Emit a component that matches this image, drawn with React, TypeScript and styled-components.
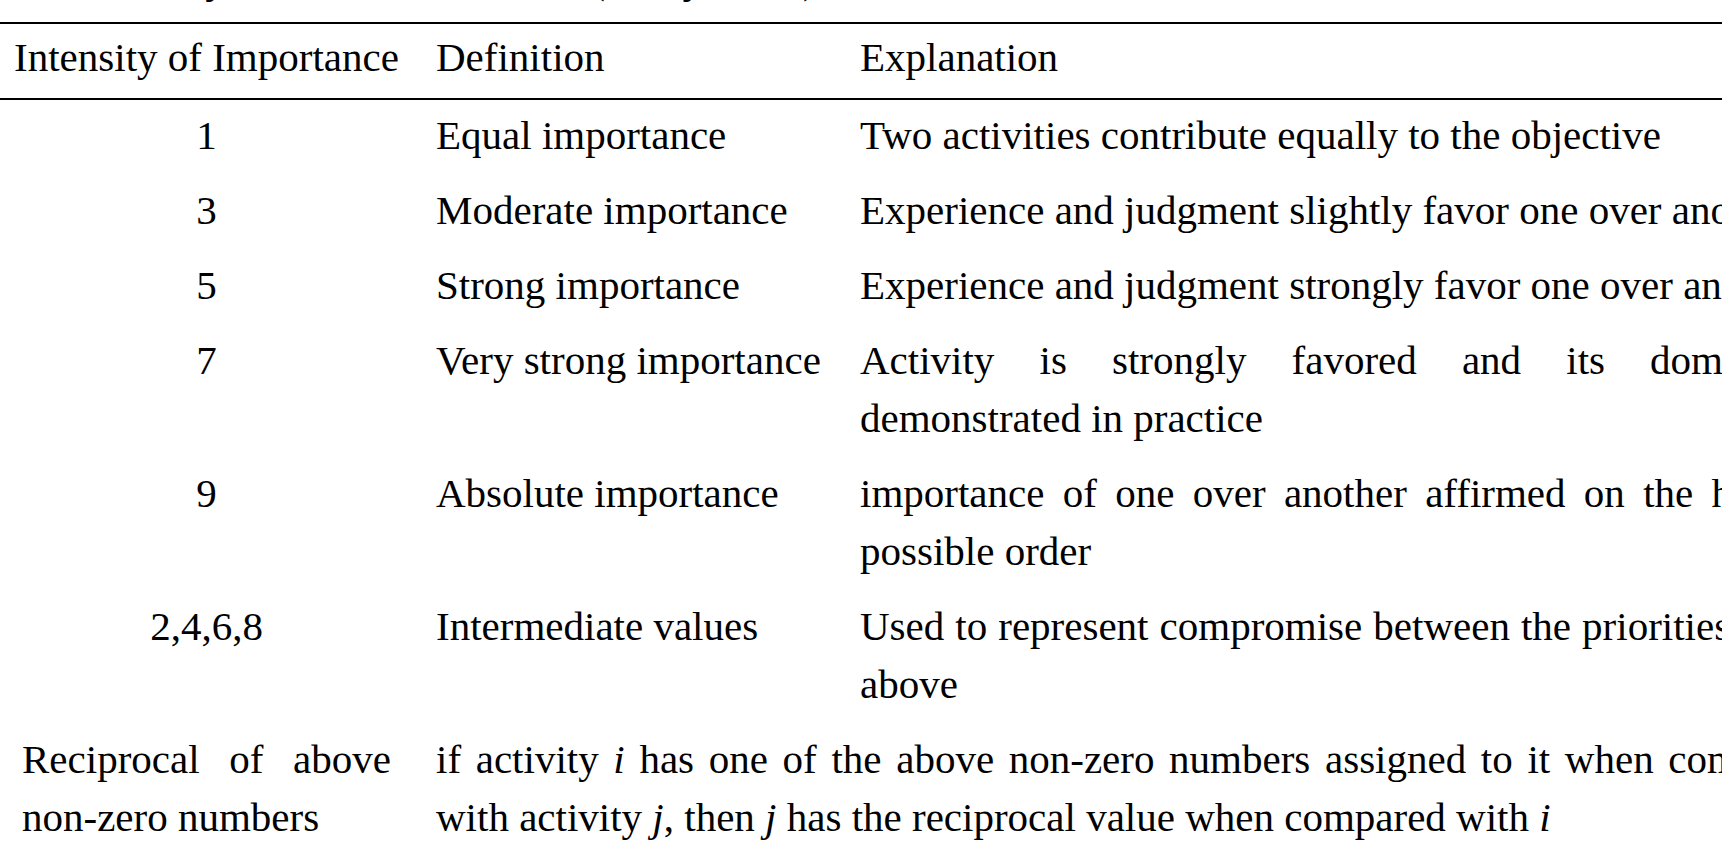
import styled, { createGlobalStyle } from 'styled-components';

const GlobalStyle = createGlobalStyle`
  html, body {
    margin: 0;
    padding: 0;
    background: #fff;
    overflow: hidden;
  }
`;

const Page = styled.main`
  width: 100vw;
  height: 100vh;
  overflow: hidden;
  color: #000;
  font-family: "Liberation Serif", "Times New Roman", serif;
  font-size: 41px;
  line-height: 58px;
`;

const Caption = styled.div`
  margin: -50px 0 14px;
  font-weight: bold;
  white-space: nowrap;
  text-indent: -20px;
`;

const Table = styled.table`
  width: 1847px;
  table-layout: fixed;
  border-collapse: collapse;
  border-spacing: 0;
`;

interface ColProps {
  width: number;
}

const Col = styled.col<ColProps>`
  width: ${props => props.width}px;
`;

interface CellProps {
  align?: 'left' | 'center' | 'justify';
  first?: boolean;
  inset?: number;
}

const HeadCell = styled.th<CellProps>`
  padding: 4px 17px 12px ${props => (props.first ? 11 : 17)}px;
  border-top: 2px solid #000;
  border-bottom: 2px solid #000;
  font-weight: normal;
  text-align: ${props => props.align || 'left'};
  white-space: nowrap;
  vertical-align: top;
`;

const Cell = styled.td<CellProps>`
  padding: 6px ${props => 17 + (props.inset || 0)}px 11px
    ${props => (props.first ? 11 : 17) + (props.inset || 0)}px;
  text-align: ${props => props.align || 'left'};
  text-align-last: ${props => (props.align === 'justify' ? 'left' : 'auto')};
  vertical-align: top;
`;

interface Row {
  value: string;
  definition: string;
  explanation: string;
}

const rows: Row[] = [
  {
    value: '1',
    definition: 'Equal importance',
    explanation: 'Two activities contribute equally to the objective',
  },
  {
    value: '3',
    definition: 'Moderate importance',
    explanation: 'Experience and judgment slightly favor one over another',
  },
  {
    value: '5',
    definition: 'Strong importance',
    explanation: 'Experience and judgment strongly favor one over another',
  },
  {
    value: '7',
    definition: 'Very strong importance',
    explanation:
      'Activity is strongly favored and its dominance demonstrated in practice',
  },
  {
    value: '9',
    definition: 'Absolute importance',
    explanation:
      'importance of one over another affirmed on the highest possible order',
  },
  {
    value: '2,4,6,8',
    definition: 'Intermediate values',
    explanation:
      'Used to represent compromise between the priorities listed above',
  },
];

function App() {
  return (
    <>
      <GlobalStyle />
      <Page>
        <Caption>Table 1. Saaty's fundamental scale (Saaty, 1980)</Caption>
        <Table>
          <colgroup>
            <Col width={419} />
            <Col width={424} />
            <Col width={1004} />
          </colgroup>
          <thead>
            <tr>
              <HeadCell first align="center">
                Intensity of Importance
              </HeadCell>
              <HeadCell>Definition</HeadCell>
              <HeadCell>Explanation</HeadCell>
            </tr>
          </thead>
          <tbody>
            {rows.map(row => (
              <tr key={row.value}>
                <Cell first align="center">
                  {row.value}
                </Cell>
                <Cell>{row.definition}</Cell>
                <Cell align="justify">{row.explanation}</Cell>
              </tr>
            ))}
            <tr>
              <Cell first align="justify" inset={11}>
                Reciprocal of above non-zero numbers
              </Cell>
              <Cell colSpan={2} align="justify">
                if activity <i>i</i> has one of the above non-zero numbers
                assigned to it when compared with activity <i>j</i>, then{' '}
                <i>j</i> has the reciprocal value when compared with <i>i</i>
              </Cell>
            </tr>
          </tbody>
        </Table>
      </Page>
    </>
  );
}

export default App;
